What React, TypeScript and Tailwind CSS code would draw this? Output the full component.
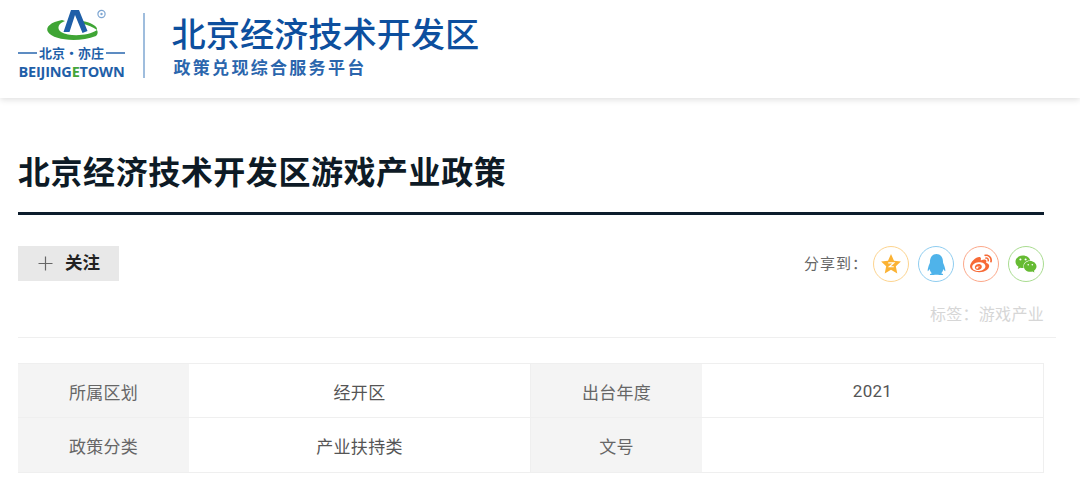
import React from "react";
import { FaWeibo, FaWeixin, FaQq } from "react-icons/fa";

const cjk = { fontFamily: '"Noto Sans CJK SC", "Noto Sans", sans-serif' };

function Logo() {
  return (
    <div className="flex w-[108px] flex-col items-center">
      <svg width="68" height="36" viewBox="0 0 68 36" className="ml-[4px] mt-[7px]">
        <path d="M22 13 C11 15 5 20 8 25 C13 33 38 36 56 29 C58 27 58 25 57 23 C48 29 30 30 21 25 C16 21 19 16 25 14 Z" fill="#3fa535" />
        <path d="M42 14 C50 15 58 19 57 23 C53 20 48 18 42 16.5 Z" fill="#3fa535" />
        <path d="M23.5 25 L31 3 L39 3 L47.5 24 L42.5 26 L35 8 L29.5 25 Z" fill="#1f5fa8" />
        <circle cx="61.5" cy="7" r="3.6" fill="none" stroke="#7ea6d2" strokeWidth="1.2" />
        <circle cx="61.5" cy="7" r="1.2" fill="#7ea6d2" />
      </svg>
      <div className="mt-[2px] flex items-center gap-[2px] text-[#1f5fa8]">
        <span className="h-[2px] w-[19px] bg-[#5d8cc2]" />
        <span className="text-[13px] leading-[16px] font-bold whitespace-nowrap" style={cjk}>北京·亦庄</span>
        <span className="h-[2px] w-[19px] bg-[#5d8cc2]" />
      </div>
      <div className="mt-[3px] text-[14.5px] leading-[15px] font-bold tracking-[-0.2px] whitespace-nowrap text-[#1f5fa8] font-['Open_Sans']">
        BEIJING<span className="text-[#45a63a]">E</span>TOWN
      </div>
    </div>
  );
}

function Circle({ color, children }: { color: string; children: React.ReactNode }) {
  return (
    <div className={`flex h-[36px] w-[36px] items-center justify-center rounded-full border-[1.5px] ${color}`}>
      {children}
    </div>
  );
}

function Label({ children }: { children: React.ReactNode }) {
  return <div className="flex w-[171px] items-center justify-center bg-[#f4f4f4] pt-[2px] tracking-[0.3px] text-[#666]">{children}</div>;
}
function Value({ children }: { children?: React.ReactNode }) {
  return <div className="flex w-[342px] items-center justify-center border-r border-[#efefef] bg-white pt-[2px] tracking-[0.3px] text-[#555]">{children}</div>;
}

export default function App() {
  return (
    <div className="h-[488px] w-[1080px] overflow-hidden bg-white" style={cjk}>
      <header className="flex h-[98px] items-start bg-white pl-[17.5px] shadow-[0_2px_6px_rgba(0,0,0,0.12)]">
        <Logo />
        <div className="ml-[17px] mt-[13px] h-[65px] w-[2px] bg-[#9fbddd]" />
        <div className="ml-[27px] mt-[13px] flex flex-col">
          <div className="text-[34.2px] leading-[38px] font-medium text-[#0d4f9e]">北京经济技术开发区</div>
          <div className="ml-[2px] mt-[5px] text-[17px] leading-[22px] font-bold tracking-[2.3px] text-[#2b66ad]">政策兑现综合服务平台</div>
        </div>
      </header>

      <main className="px-[18px]">
        <h1 className="mt-[49px] text-[32px] leading-[46px] font-bold tracking-[0.55px] text-[#0e1b26]">北京经济技术开发区游戏产业政策</h1>
        <div className="mt-[19px] h-[3px] w-[1026px] bg-[#0c1c2c]" />

        <div className="mt-[31px] flex w-[1026px] items-center justify-between">
          <div className="-mt-px flex h-[35px] w-[101px] items-center bg-[#e8e8e8] pl-[20px]">
            <svg width="15" height="15" viewBox="0 0 15 15" className="mr-[12px]">
              <path d="M7.5 0.5V14.5M0.5 7.5H14.5" stroke="#666" strokeWidth="1.2" />
            </svg>
            <span className="-mt-[3px] text-[17.5px] leading-[20px] font-bold text-[#222]">关注</span>
          </div>
          <div className="flex items-center">
            <span className="mr-[5px] -mt-[2px] text-[15px] tracking-[1px] text-[#666]">分享到：</span>
            <div className="flex gap-[9px]">
              <Circle color="border-[#fdd48f]">
                <svg width="22" height="22" viewBox="0 0 20 20">
                  <path d="M10 1 L12.7 7 L19 7.7 L14.4 12 L15.7 18.6 L10 15.3 L4.3 18.6 L5.6 12 L1 7.7 L7.3 7 Z" fill="#fbb233" />
                  <path d="M7.5 9 H12.5 L8.5 12.5 H12.5" stroke="#fff" strokeWidth="1.1" fill="none" />
                </svg>
              </Circle>
              <Circle color="border-[#8fcdf0]"><FaQq className="text-[21px] text-[#4fb3ea]" /></Circle>
              <Circle color="border-[#fca88a]"><FaWeibo className="text-[22px] text-[#f76a36]" /></Circle>
              <Circle color="border-[#a9dc90]"><FaWeixin className="text-[22px] text-[#66bb33]" /></Circle>
            </div>
          </div>
        </div>

        <div className="mt-[20px] flex h-[36px] w-[1038px] items-start justify-end border-b border-[#efefef] pr-[12px]">
          <span className="text-[16px] leading-[23px] tracking-[0.3px] text-[#d6d6d6]">标签：游戏产业</span>
        </div>

        <div className="mt-[25px] flex w-[1026px] flex-col gap-px border-y border-[#efefef] bg-[#efefef] text-[17px]">
          <div className="flex h-[53px]">
            <Label>所属区划</Label>
            <Value>经开区</Value>
            <Label>出台年度</Label>
            <Value><span className="mt-[1px] font-['Roboto']">2021</span></Value>
          </div>
          <div className="flex h-[54px]">
            <Label>政策分类</Label>
            <Value>产业扶持类</Value>
            <Label>文号</Label>
            <Value />
          </div>
        </div>
      </main>
    </div>
  );
}
